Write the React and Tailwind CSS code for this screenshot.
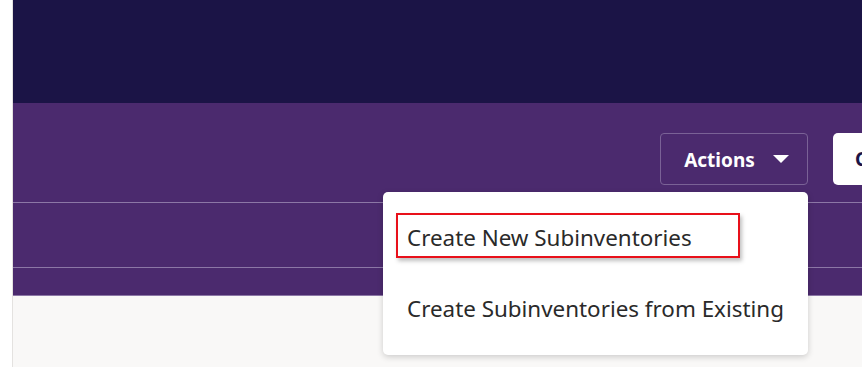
export default function App() {
  return (
    <div className="relative flex h-[367px] w-[862px] overflow-hidden bg-white" style={{ fontFamily: '"Noto Sans", Lato, sans-serif' }}>
      {/* left gutter */}
      <div className="w-[13px] shrink-0 border-r border-[#e4e2e0] bg-white"></div>

      <div className="flex min-w-0 flex-1 flex-col">
        {/* top header */}
        <div className="h-[103px] shrink-0 bg-[#1b1446]"></div>

        {/* purple band */}
        <div className="flex h-[193px] shrink-0 flex-col border-b border-[#8c77a6] bg-[#4b2a6e]">
          <div className="flex h-[99px] items-start justify-end gap-[25px] pt-[30px]">
            <button className="flex h-[52px] w-[148px] items-center justify-center gap-[18px] rounded-[4px] border border-[#7a6296] pb-[1px] pl-[5px] text-[19px] font-bold text-white">
              <span className="mt-[3px]">Actions</span>
              <svg width="16" height="8" viewBox="0 0 16 8" className="mt-[1px]">
                <path d="M0 0h16L8 8z" fill="#ffffff" />
              </svg>
            </button>
            <button className="flex h-[52px] w-[29px] shrink-0 items-center justify-start rounded-l-[5px] bg-white pl-[22px] text-[19px] font-bold text-[#1b1446]">
              C
            </button>
          </div>
          <div className="h-px bg-[#8c77a6]"></div>
          <div className="h-[64px]"></div>
          <div className="h-px bg-[#8c77a6]"></div>
          <div className="flex-1"></div>
        </div>

        {/* content */}
        <div className="flex-1 bg-[#f9f8f7]"></div>
      </div>

      {/* actions menu */}
      <div className="absolute left-[383px] top-[192px] flex h-[163px] w-[425px] flex-col rounded-[5px] bg-white pl-[13px] pt-[21px] shadow-[0_2px_6px_rgba(0,0,0,0.18)]">
        <div className="flex h-[45px] w-[344px] items-center border-2 border-[#e8101a] pl-[9px] pt-[4px] text-[22.4px] text-[#2a2a2a] shadow-[2px_3px_4px_rgba(0,0,0,0.25)]">
          Create New Subinventories
        </div>
        <div className="mt-[34px] flex h-[34px] items-center pl-[11px] text-[22.4px] text-[#2a2a2a]">
          Create Subinventories from Existing
        </div>
      </div>
    </div>
  );
}
